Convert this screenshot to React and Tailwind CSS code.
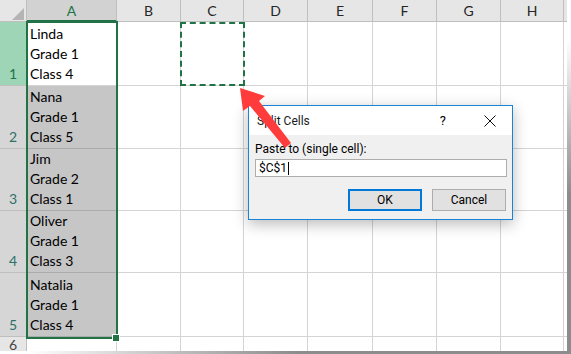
const cols = ['A', 'B', 'C', 'D', 'E', 'F', 'G', 'H', '']

const rows = [
  { n: 1, lines: ['Linda', 'Grade 1', 'Class 4'] },
  { n: 2, lines: ['Nana', 'Grade 1', 'Class 5'] },
  { n: 3, lines: ['Jim', 'Grade 2', 'Class 1'] },
  { n: 4, lines: ['Oliver', 'Grade 1', 'Class 3'] },
  { n: 5, lines: ['Natalia', 'Grade 1', 'Class 4'] },
  { n: 6, lines: [] },
]

function ColHeader({ label }) {
  const active = label === 'A'
  return (
    <div
      className={
        active
          ? 'flex items-center justify-center border-r border-b-2 border-r-[#bfbfbf] border-b-[#217346] bg-[#d2d2d2] text-[#217346]'
          : 'flex items-center justify-center border-r border-b border-[#bfbfbf] bg-[#e6e6e6] text-[#262626]'
      }
    >
      {label}
    </div>
  )
}

function RowHeader({ n }) {
  let cls = 'bg-[#e6e6e6] text-[#444444]'
  if (n === 1) cls = 'bg-[#9fd5b7] text-[#217346]'
  else if (n <= 5) cls = 'bg-[#d6d6d6] text-[#2f6f6a]'
  return (
    <div className={`flex items-end justify-center border-r border-b border-[#bfbfbf] pb-[1px] leading-[20px] ${cls}`}>
      {n}
    </div>
  )
}

function CellA({ row }) {
  const selected = row.n >= 2 && row.n <= 5
  return (
    <div
      className={
        selected
          ? 'flex flex-col justify-end border-r border-b border-[#ababab] bg-[#c6c6c6] pl-[3px] pb-[1px] leading-[20px] text-black'
          : 'flex flex-col justify-end border-r border-b border-[#d4d4d4] bg-white pl-[3px] pb-[1px] leading-[20px] text-black'
      }
    >
      {row.lines.map((l) => (
        <div key={l}>{l}</div>
      ))}
    </div>
  )
}

function Sheet() {
  return (
    <div className="relative h-[351px] w-[567px] overflow-hidden bg-white">
      <div className="grid grid-cols-[27px_90px_64px_63px_64px_65px_64px_64px_63px_40px] grid-rows-[22px_64px_63px_62px_62px_64px_20px] text-[14px]">
        <div className="relative border-r border-b border-[#bfbfbf] bg-[#e6e6e6]">
          <svg className="absolute left-0 top-0" width="27" height="22" viewBox="0 0 27 22">
            <polygon points="24,8 24,20 12,20" fill="#b4b4b4" />
          </svg>
        </div>
        {cols.map((c, i) => (
          <ColHeader key={i} label={c} />
        ))}
        {rows.map((row) => (
          <div key={row.n} className="contents">
            <RowHeader n={row.n} />
            <CellA row={row} />
            {cols.slice(1).map((c, i) => (
              <div key={i} className="relative border-r border-b border-[#d4d4d4] bg-white" />
            ))}
          </div>
        ))}
      </div>

      {/* selection A1:A5 */}
      <div className="pointer-events-none absolute left-[26px] top-[21px] h-[318px] w-[92px] border-2 border-[#217346]" />
      <div className="absolute left-[112px] top-[334px] h-[8px] w-[8px] border border-white bg-[#217346]" />

      {/* copy marquee C1 */}
      <div className="pointer-events-none absolute left-[180px] top-[22px] h-[64px] w-[65px] border-2 border-dashed border-[#217346]" />
    </div>
  )
}

function Dialog() {
  return (
    <div className="absolute left-[248px] top-[105px] flex h-[115px] w-[265px] flex-col border border-[#1883d7] bg-[#f0f0f0] font-['Roboto',sans-serif] text-[12px] text-black shadow-[0_4px_14px_rgba(0,0,0,0.28)]">
      <div className="flex h-[29px] items-center bg-white pl-[8px]">
        <span className="flex-1 text-[#1a1a1a]">Split Cells</span>
        <span className="mr-[38px] text-[13px]">?</span>
        <svg className="mr-[16px]" width="12" height="12" viewBox="0 0 12 12">
          <path d="M0.5 0.5 L11.5 11.5 M11.5 0.5 L0.5 11.5" stroke="#111" strokeWidth="1" fill="none" />
        </svg>
      </div>
      <div className="flex flex-col px-[6px]">
        <div className="mt-[6px] leading-[16px]">Paste to (single cell):</div>
        <div className="mt-[2px] flex h-[18px] w-[252px] items-center border border-[#adadad] bg-white pl-[3px] leading-[16px]">
          <span>$C$1</span>
          <span className="ml-[1px] inline-block h-[13px] w-[1px] bg-black" />
        </div>
        <div className="mt-[12px] flex justify-end gap-[10px]">
          <div className="flex h-[22px] w-[74px] items-center justify-center border-2 border-[#0078d7] bg-[#e1e1e1]">OK</div>
          <div className="flex h-[22px] w-[74px] items-center justify-center border border-[#adadad] bg-[#e1e1e1]">Cancel</div>
        </div>
      </div>
    </div>
  )
}

export default function App() {
  return (
    <div className="relative h-[354px] w-[571px] overflow-hidden bg-white font-['Lato',sans-serif]">
      <div className="flex">
        <Sheet />
        <div className="mt-[40px] h-[311px] w-[4px] bg-gradient-to-b from-[#ffffff] via-[#8c8c8c] to-[#8c8c8c]" />
      </div>
      <div className="ml-[28px] h-[3px] w-[543px] bg-gradient-to-r from-[#ffffff] via-[#8c8c8c] to-[#8c8c8c]" />

      <Dialog />

      <svg className="pointer-events-none absolute left-0 top-0" width="571" height="354" viewBox="0 0 571 354">
        <polygon points="240,88 265,96 259,101 291,143 285,148 250,106 243,111" fill="#ff3b3b" />
      </svg>
    </div>
  )
}
